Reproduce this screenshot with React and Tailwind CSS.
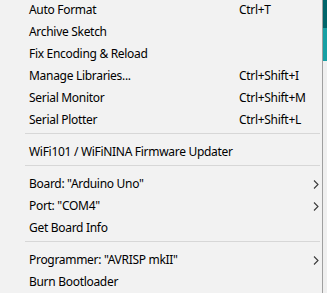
import React from "react";

const items = [
  { label: "Auto Format", shortcut: "Ctrl+T" },
  { label: "Archive Sketch" },
  { label: "Fix Encoding & Reload" },
  { label: "Manage Libraries...", shortcut: "Ctrl+Shift+I" },
  { label: "Serial Monitor", shortcut: "Ctrl+Shift+M" },
  { label: "Serial Plotter", shortcut: "Ctrl+Shift+L" },
  { sep: true },
  { label: "WiFi101 / WiFiNINA Firmware Updater" },
  { sep: true },
  { label: 'Board: "Arduino Uno"', sub: true },
  { label: 'Port: "COM4"', sub: true },
  { label: "Get Board Info" },
  { sep: true },
  { label: 'Programmer: "AVRISP mkII"', sub: true },
  { label: "Burn Bootloader" },
];

const Chevron = () => (
  <svg width="6" height="9" viewBox="0 0 6 9" className="block">
    <path d="M1 0.5 L5 4.5 L1 8.5" fill="none" stroke="#3a3a3a" strokeWidth="1.1" />
  </svg>
);

const App = () => {
  return (
    <div
      className="w-[327px] h-[293px] overflow-hidden flex bg-[#f2f2f2] text-[12px] tracking-[-0.3px] text-black"
      style={{ fontFamily: '"Noto Sans", "Segoe UI", sans-serif' }}
    >
      <div className="w-[323px] border-r border-[#a0a0a0] flex flex-col -mt-[1px]">
        {items.map((item, i) =>
          item.sep ? (
            <div key={i} className="h-[10px] pt-[2px] pl-[25px] pr-[2px]">
              <div className="h-px bg-[#d7d7d7]" />
            </div>
          ) : (
            <div key={i} className="h-[22px] flex items-center shrink-0 relative">
              <span className="pl-[29px] leading-none">{item.label}</span>
              {item.shortcut && (
                <span className="absolute left-[239px] leading-none">{item.shortcut}</span>
              )}
              {item.sub && (
                <span className="absolute left-[313px]">
                  <Chevron />
                </span>
              )}
            </div>
          )
        )}
      </div>
      <div className="w-[4px] flex flex-col">
        <div className="h-[28px] bg-[#00656a]" />
        <div className="h-[33px] bg-[#17a0a4]" />
        <div className="flex-1 bg-[#f0f0f0]" />
      </div>
    </div>
  );
};

export default App;
